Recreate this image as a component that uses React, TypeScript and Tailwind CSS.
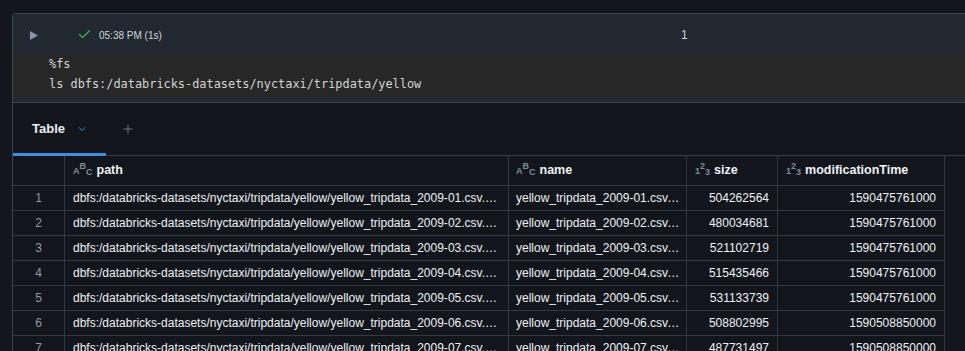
import { Check, ChevronDown, Plus } from 'lucide-react'

const rows = [
  { n: 1, month: '01', size: '504262564', time: '1590475761000' },
  { n: 2, month: '02', size: '480034681', time: '1590475761000' },
  { n: 3, month: '03', size: '521102719', time: '1590475761000' },
  { n: 4, month: '04', size: '515435466', time: '1590475761000' },
  { n: 5, month: '05', size: '531133739', time: '1590475761000' },
  { n: 6, month: '06', size: '508802995', time: '1590508850000' },
  { n: 7, month: '07', size: '487731497', time: '1590508850000' },
]

function StringIcon() {
  return (
    <span className="inline-flex items-end font-semibold text-[#7d8b99] leading-none mr-[4px]">
      <span className="text-[9px] translate-y-[1px]">A</span>
      <span className="text-[9px] -translate-y-[4px]">B</span>
      <span className="text-[9px] translate-y-[2px]">C</span>
    </span>
  )
}

function NumberIcon() {
  return (
    <span className="inline-flex items-end font-semibold text-[#7d8b99] leading-none mr-[4px]">
      <span className="text-[9px] translate-y-[1px]">1</span>
      <span className="text-[9px] -translate-y-[4px]">2</span>
      <span className="text-[9px] translate-y-[2px]">3</span>
    </span>
  )
}

export default function App() {
  return (
    <div className="w-[965px] h-[351px] overflow-hidden bg-[#13171d] pt-[13px] pl-[12px] font-['Liberation_Sans',sans-serif]">
      <div className="w-[960px] h-[400px] border-l border-t border-[#3a424b] rounded-tl-[4px] bg-[#12161c] flex flex-col">
        {/* cell header */}
        <div className="h-[40px] bg-[#212830] flex items-center relative">
          <svg width="8" height="9" viewBox="0 0 8 9" className="absolute left-[17px] top-[17px]">
            <polygon points="0,0 8,4.5 0,9" fill="#8496a8" />
          </svg>
          <Check size={15} strokeWidth={2} className="absolute left-[64px] top-[13px] text-[#3fb950]" />
          <span className="absolute left-[86px] top-[14px] text-[10px] text-[#cfd6dd]">05:38 PM (1s)</span>
          <span className="absolute left-[668px] top-[12px] text-[12px] text-[#c9d1d9]">1</span>
        </div>

        {/* code */}
        <div className="bg-[#212830] pb-[6px] border-b border-[#3a424b]">
          <div className="h-[42px] bg-[#272727] pl-[36px] font-['DejaVu_Sans_Mono',monospace] text-[11.9px] leading-[20px] text-[#d4d4d4]">
            <div>%fs</div>
            <div>ls dbfs:/databricks-datasets/nyctaxi/tripdata/yellow</div>
          </div>
        </div>

        {/* tabs */}
        <div className="h-[53px] border-b border-[#323941] flex items-center">
          <div className="relative w-[93px] h-full flex items-center pl-[19px]">
            <span className="text-[13px] font-semibold text-[#e6edf3]">Table</span>
            <ChevronDown size={12} strokeWidth={2} className="ml-[11px] text-[#4a90d9]" />
            <div className="absolute left-0 right-0 -bottom-[1px] h-[3px] bg-[#3c8fdd]" />
          </div>
          <Plus size={14} strokeWidth={1} className="ml-[15px] text-[#a8b0b8]" />
        </div>

        {/* table */}
        <div className="text-[12px] text-[#edf1f5]">
          <div className="flex h-[30px] border-b border-[#323941] w-[932px] text-[12.5px]">
            <div className="w-[52px] border-r border-[#323941]" />
            <div className="w-[444px] border-r border-[#323941] flex items-center pl-[8px] font-semibold">
              <StringIcon />path
            </div>
            <div className="w-[178px] border-r border-[#323941] flex items-center pl-[7px] font-semibold">
              <StringIcon />name
            </div>
            <div className="w-[91px] border-r border-[#323941] flex items-center pl-[8px] font-semibold">
              <NumberIcon />size
            </div>
            <div className="w-[167px] border-r border-[#323941] flex items-center pl-[8px] font-semibold">
              <NumberIcon />modificationTime
            </div>
          </div>
          {rows.map((r) => (
            <div key={r.n} className="flex h-[25px] border-b border-[#323941] w-[932px]">
              <div className="w-[52px] border-r border-[#323941] flex items-center justify-center text-[#8a9bb0]">
                {r.n}
              </div>
              <div className="w-[444px] border-r border-[#323941] flex items-center pl-[8px] pr-[4px]">
                <span className="truncate">
                  dbfs:/databricks-datasets/nyctaxi/tripdata/yellow/yellow_tripdata_2009-{r.month}.csv.…
                </span>
              </div>
              <div className="w-[178px] border-r border-[#323941] flex items-center pl-[7px] pr-[4px]">
                <span className="truncate">yellow_tripdata_2009-{r.month}.csv.…</span>
              </div>
              <div className="w-[91px] border-r border-[#323941] flex items-center justify-end pr-[8px]">
                {r.size}
              </div>
              <div className="w-[167px] border-r border-[#323941] flex items-center justify-end pr-[8px]">
                {r.time}
              </div>
            </div>
          ))}
        </div>
      </div>
    </div>
  )
}
